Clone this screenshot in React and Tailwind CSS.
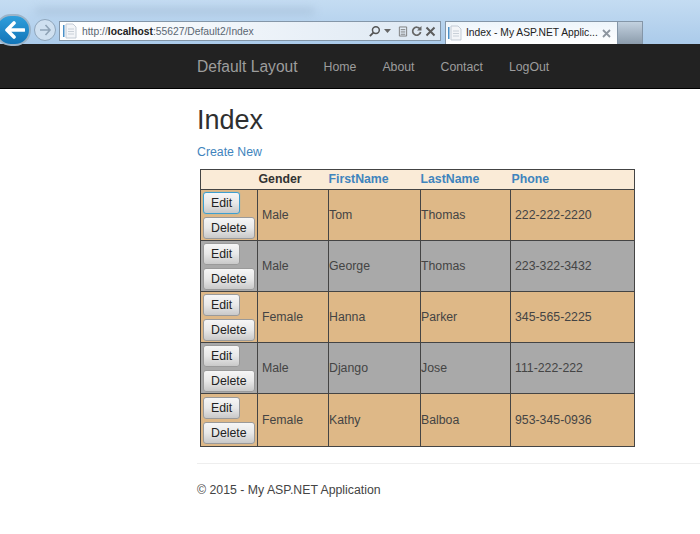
import React from "react";

const rows = [
  ["Male", "Tom", "Thomas", "222-222-2220", true],
  ["Male", "George", "Thomas", "223-322-3432", false],
  ["Female", "Hanna", "Parker", "345-565-2225", true],
  ["Male", "Django", "Jose", "111-222-222", false],
  ["Female", "Kathy", "Balboa", "953-345-0936", true],
];

function Btn({ children, focus }) {
  return (
    <button
      className={`block h-[22px] rounded-[3px] border bg-gradient-to-b from-[#f6f6f6] via-[#e8e8e8] to-[#c9c9c9] px-[7px] text-[12.3px] leading-[18px] text-[#222] ${
        focus ? "border-[#3d9fd0] shadow-[0_0_1px_#5ab4e0]" : "border-[#9a9a9a]"
      }`}
    >
      {children}
    </button>
  );
}

function PageIcon() {
  return (
    <svg width="16" height="16" viewBox="0 0 16 16" className="shrink-0">
      <rect x="0" y="2" width="1.5" height="12" fill="#4a90c8" />
      <path d="M3 1h7l3 3v11H3z" fill="#f3f5f8" stroke="#c3cbd5" />
      <path d="M5 6h6M5 8.5h6M5 11h6" stroke="#c9d0d8" />
    </svg>
  );
}

export default function App() {
  return (
    <div className="relative h-[534px] w-[700px] overflow-hidden bg-white font-['Liberation_Sans',Arial,sans-serif] text-[12.3px] text-[#444]">
      {/* browser chrome */}
      <div className="relative flex h-[44px] items-start bg-gradient-to-b from-[#c4dcf2] to-[#abcbea] pl-[59px] pt-[21px]">
        <div className="absolute left-[35px] top-[8px] h-[6px] w-[280px] rounded-full bg-[#8ea6c0] opacity-40 blur-[4px]" />
        <div className="absolute left-[-5px] top-[14px] flex h-[32px] w-[36px] items-center justify-center rounded-full border-2 border-[#9db4c8] bg-gradient-to-b from-[#2f9fdc] to-[#1275b8]">
          <svg width="20" height="18" viewBox="0 0 20 18" className="ml-[3px]">
            <path d="M9 2 2 9l7 7M2.5 9H19" fill="none" stroke="#fff" strokeWidth="3.6" strokeLinecap="round" strokeLinejoin="round" />
          </svg>
        </div>
        <div className="absolute left-[34px] top-[19px] flex h-[22px] w-[22px] items-center justify-center rounded-full border border-[#8fa6bc] bg-[#cfe0f0]">
          <svg width="14" height="14" viewBox="0 0 14 14">
            <path d="M7.5 2 12 7l-4.5 5M12 7H2" fill="none" stroke="#8fa3b6" strokeWidth="1.6" />
          </svg>
        </div>
        <div className="flex h-[20px] w-[382px] items-center border border-[#8496a8] bg-gradient-to-r from-white to-[#dde8f3] pl-[3px] text-[10.3px] text-[#5a6672]">
          <PageIcon />
          <span className="ml-[3px] mt-[1px]">
            http://<b className="font-bold text-[#222]">localhost</b>:55627/Default2/Index
          </span>
          <div className="ml-auto mr-[4px] flex items-center gap-[3px] text-[#555]">
            <svg width="13" height="13" viewBox="0 0 14 14">
              <circle cx="8.5" cy="5.5" r="3.7" fill="none" stroke="#555" strokeWidth="1.6" />
              <path d="M6 8 2 12" stroke="#555" strokeWidth="2" />
            </svg>
            <svg width="7" height="4" viewBox="0 0 7 4"><path d="M0 0h7L3.5 4z" fill="#666" /></svg>
            <svg width="10" height="11" viewBox="0 0 11 12" className="ml-[4px]">
              <path d="M1.5 1h8v10h-8zM3 4h5M3 6.5h5M3 9h5" fill="none" stroke="#777" />
            </svg>
            <svg width="11" height="12" viewBox="0 0 11 12">
              <path d="M9 4a4 4 0 1 0 .6 3" fill="none" stroke="#666" strokeWidth="1.7" />
              <path d="M10.5 1v4.5H6z" fill="#666" />
            </svg>
            <svg width="11" height="11" viewBox="0 0 11 11">
              <path d="m1.5 1.5 8 8m0-8-8 8" stroke="#5c5c5c" strokeWidth="2" />
            </svg>
          </div>
        </div>
        <div className="ml-[4px] flex h-[23px] w-[173px] items-center border border-b-0 border-[#8496a8] bg-gradient-to-b from-[#eef5fb] to-white pl-[2px] pr-[4px] text-[10.3px] text-[#222]">
          <PageIcon />
          <span className="ml-[2px] whitespace-nowrap">Index - My ASP.NET Applic...</span>
          <svg width="9" height="9" viewBox="0 0 9 9" className="ml-auto mr-[2px]">
            <path d="m1 1 7 7m0-7-7 7" stroke="#8d969f" strokeWidth="1.8" />
          </svg>
        </div>
        <div className="h-[23px] w-[25px] border border-l-0 border-b-0 border-[#8496a8] bg-gradient-to-b from-[#c3d2e0] to-[#8c9cac]" />
      </div>

      {/* navbar */}
      <div className="flex h-[45px] items-center border-b border-black bg-[#222] pt-[2px] pl-[197px] text-[#9d9d9d]">
        <span className="text-[15.6px]">Default Layout</span>
        <span className="ml-[26px]">Home</span>
        <span className="ml-[26px]">About</span>
        <span className="ml-[26px]">Contact</span>
        <span className="ml-[26px]">LogOut</span>
      </div>

      {/* content */}
      <div className="pl-[197px]">
        <h1 className="mt-[13px] text-[27px] leading-[36px] text-[#2f2f2f]">Index</h1>
        <a className="mt-[5px] block leading-[19px] text-[#3f84bd]">Create New</a>
        <table className="ml-[3px] mt-[7px] w-[434px] table-fixed border-collapse">
          <colgroup>
            <col className="w-[57px]" />
            <col className="w-[71px]" />
            <col className="w-[92px]" />
            <col className="w-[90px]" />
            <col className="w-[124px]" />
          </colgroup>
          <thead>
            <tr className="h-[20px] border border-[#444] bg-[#faebd7] text-left font-bold">
              <th />
              <th className="pl-[1px] text-[#333]">Gender</th>
              <th className="text-[#3f84bd]">FirstName</th>
              <th className="text-[#3f84bd]">LastName</th>
              <th className="pl-[1px] text-[#3f84bd]">Phone</th>
            </tr>
          </thead>
          <tbody>
            {rows.map((r, i) => (
              <tr key={i} className={`${i === 4 ? "h-[53px]" : "h-[51px]"} ${r[4] ? "bg-[#deb887]" : "bg-[#a9a9a9]"}`}>
                <td className="border border-[#444] pl-[2px]">
                  <div className="flex flex-col items-start gap-[3px]">
                    <Btn focus={i === 0}>Edit</Btn>
                    <Btn>Delete</Btn>
                  </div>
                </td>
                <td className="border border-[#444] pl-[4px]">{r[0]}</td>
                <td className="border border-[#444]">{r[1]}</td>
                <td className="border border-[#444]">{r[2]}</td>
                <td className="border border-[#444] pl-[4px]">{r[3]}</td>
              </tr>
            ))}
          </tbody>
        </table>
        <hr className="mt-[16px] border-t border-[#eee]" />
        <p className="mt-[17px] leading-[18px]">© 2015 - My ASP.NET Application</p>
      </div>
    </div>
  );
}
